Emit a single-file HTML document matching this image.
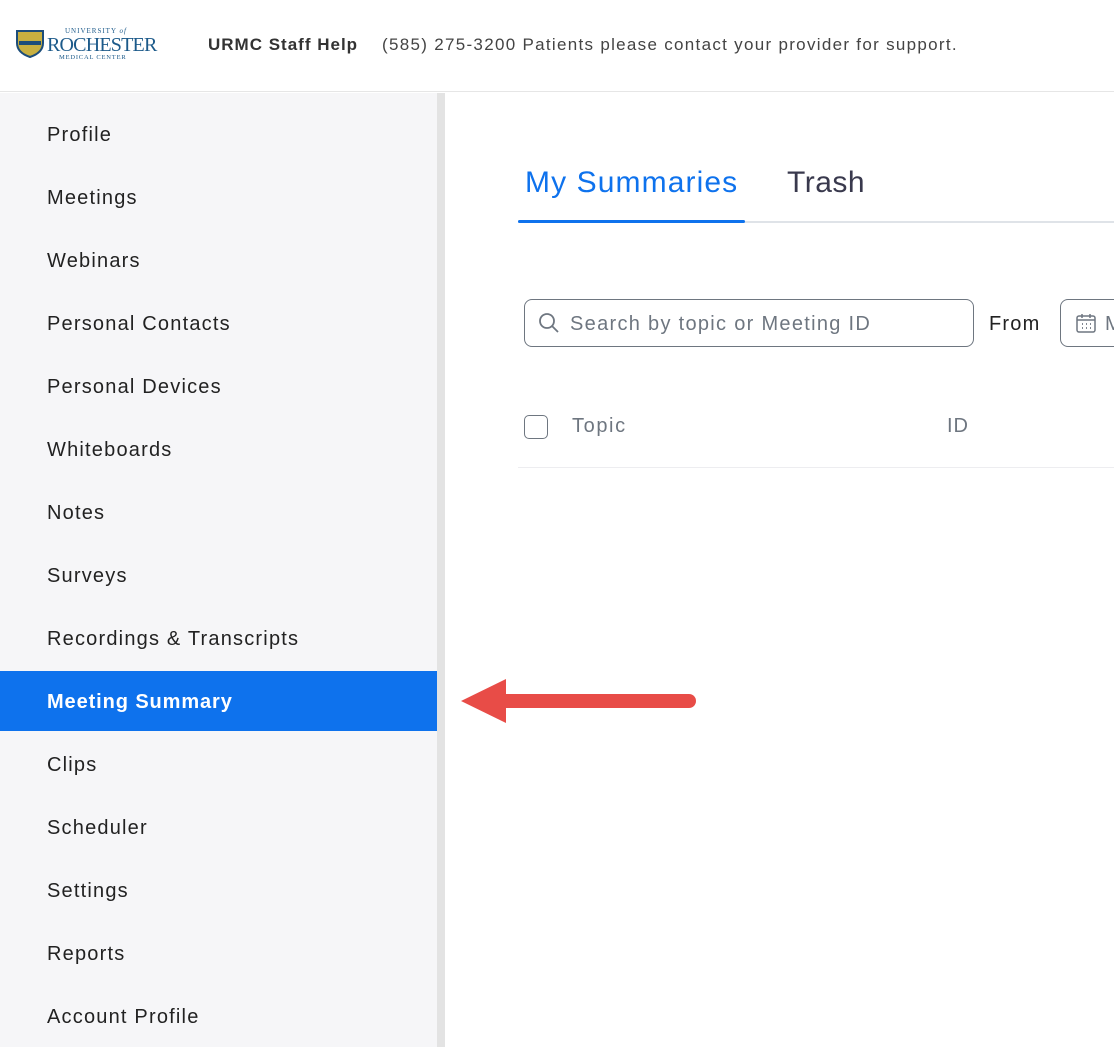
<!DOCTYPE html>
<html><head><meta charset="utf-8"><style>
*{margin:0;padding:0;box-sizing:border-box}
body{width:1114px;height:1047px;overflow:hidden;background:#fff;font-family:"Liberation Sans",Arial,sans-serif;position:relative}
.hdr{position:absolute;left:0;top:0;width:1114px;height:92px;border-bottom:1px solid #e6e6e6;background:#fff}
.side{position:absolute;left:0;top:93px;width:437px;height:954px;background:#f6f6f8}
.sb{position:absolute;left:437px;top:93px;width:8px;height:954px;background:#e3e3e3}
.it{position:absolute;left:0;width:437px;height:60px;line-height:62px;padding-left:47px;font-size:20px;color:#222;letter-spacing:1.2px}
.it.on{background:#0e72ed;color:#fff;font-weight:bold;letter-spacing:0.9px}
</style></head><body>
<div class="hdr">
<svg style="position:absolute;left:15px;top:28px" width="30" height="30" viewBox="0 0 30 30"><path d="M2 3h26v12c0 8-7 12-13 14C9 27 2 23 2 15z" fill="#c8b040" stroke="#1c4d7a" stroke-width="2"/><rect x="4" y="13" width="22" height="4" fill="#1c4d7a"/></svg>
<div style="position:absolute;left:47px;top:28px;width:105px;color:#1c5a8a;font-family:'Liberation Serif',serif;line-height:1">
<div style="font-size:7px;letter-spacing:1px;padding-left:18px">UNIVERSITY <i>of</i></div>
<div style="font-size:20px;letter-spacing:-0.8px">ROCHESTER</div>
<div style="font-size:6.5px;letter-spacing:0.8px;padding-left:12px">MEDICAL CENTER</div></div>
<div style="position:absolute;left:208px;top:35px;font-size:17px;color:#333;letter-spacing:1px"><b>URMC Staff Help</b><span style="position:absolute;left:174px;top:0;white-space:nowrap;color:#444;letter-spacing:1.3px">(585) 275-3200 Patients please contact your provider for support.</span></div>
</div>
<div class="side">
<div class="it" style="top:11px">Profile</div>
<div class="it" style="top:74px">Meetings</div>
<div class="it" style="top:137px">Webinars</div>
<div class="it" style="top:200px">Personal Contacts</div>
<div class="it" style="top:263px">Personal Devices</div>
<div class="it" style="top:326px">Whiteboards</div>
<div class="it" style="top:389px">Notes</div>
<div class="it" style="top:452px">Surveys</div>
<div class="it" style="top:515px">Recordings &amp; Transcripts</div>
<div class="it on" style="top:578px">Meeting Summary</div>
<div class="it" style="top:641px">Clips</div>
<div class="it" style="top:704px">Scheduler</div>
<div class="it" style="top:767px">Settings</div>
<div class="it" style="top:830px">Reports</div>
<div class="it" style="top:893px">Account Profile</div>
</div>
<div class="sb"></div>
<div style="position:absolute;left:525px;top:166px;font-size:30px;color:#0e72ed;letter-spacing:1.1px">My Summaries</div>
<div style="position:absolute;left:787px;top:166px;font-size:30px;color:#39394d;letter-spacing:0.5px">Trash</div>
<div style="position:absolute;left:518px;top:221px;width:596px;height:2px;background:#dfe3e8"></div>
<div style="position:absolute;left:518px;top:220px;width:227px;height:3px;background:#0e72ed;border-radius:2px"></div>
<div style="position:absolute;left:524px;top:299px;width:450px;height:48px;border:1px solid #6e7680;border-radius:8px"></div>
<svg style="position:absolute;left:538px;top:312px" width="22" height="22" viewBox="0 0 22 22" fill="none" stroke="#6e7680" stroke-width="1.8"><circle cx="9" cy="9" r="7"/><path d="M14 14l6 6"/></svg>
<div style="position:absolute;left:570px;top:313px;font-size:20px;color:#6e7680;letter-spacing:1.3px">Search by topic or Meeting ID</div>
<div style="position:absolute;left:989px;top:313px;font-size:20px;color:#222;letter-spacing:1.2px">From</div>
<div style="position:absolute;left:1060px;top:299px;width:80px;height:48px;border:1px solid #6e7680;border-radius:8px"></div>
<svg style="position:absolute;left:1075px;top:312px" width="22" height="22" viewBox="0 0 22 22" fill="none" stroke="#6e7680" stroke-width="1.5"><rect x="2" y="4" width="18" height="16" rx="2"/><path d="M2 8h18M7 2v4M15 2v4"/><path d="M7 12h1M11 12h1M15 12h1M7 16h1M11 16h1M15 16h1" stroke-width="1.8"/></svg>
<div style="position:absolute;left:1105px;top:313px;font-size:20px;color:#6e7680">M</div>
<div style="position:absolute;left:524px;top:415px;width:24px;height:24px;border:1.5px solid #6e7680;border-radius:5px"></div>
<div style="position:absolute;left:572px;top:415px;font-size:20px;color:#6e7680;letter-spacing:1.6px">Topic</div>
<div style="position:absolute;left:947px;top:415px;font-size:20px;color:#6e7680;letter-spacing:1px">ID</div>
<div style="position:absolute;left:518px;top:467px;width:596px;height:1px;background:#ededf0"></div>
<svg style="position:absolute;left:455px;top:675px" width="250" height="52" viewBox="0 0 250 52"><path d="M50 26H234" stroke="#e84c47" stroke-width="14" stroke-linecap="round"/><path d="M6 26L51 4V48z" fill="#e84c47"/></svg>
</body></html>
